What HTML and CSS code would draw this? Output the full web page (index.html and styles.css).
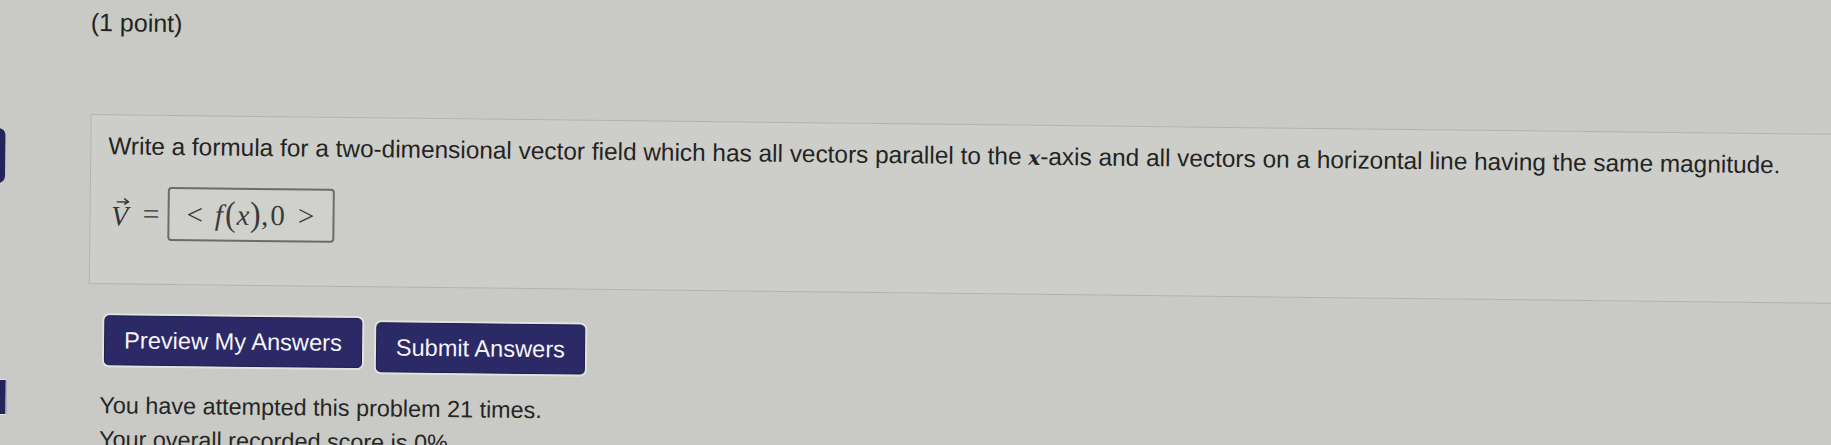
FILE: index.html
```html
<!DOCTYPE html>
<html lang="en">
<head>
<meta charset="utf-8">
<title>Problem</title>
<link rel="stylesheet" href="styles.css">
</head>
<body>
<div class="page">
  <div class="gutter">
    <div class="tab tab-top"></div>
    <div class="tab tab-bottom"></div>
  </div>
  <div class="main">
    <div class="points">(1 point)</div>
    <div class="problem">
      <div class="statement">Write a formula for a two-dimensional vector field which has all vectors parallel to the <span class="mathvar">x</span>-axis and all vectors on a horizontal line having the same magnitude.</div>
      <div class="answer-row">
        <span class="vec">
          <svg class="vec-arrow" width="14" height="8" viewBox="0 0 14 8" aria-hidden="true"><path d="M1 4.5 H12" stroke="#333" stroke-width="1.4" fill="none"/><path d="M8.5 1.2 L12.8 4.5 L8.5 7" stroke="#333" stroke-width="1.4" fill="none"/></svg>
          <span class="vec-letter">V</span>
        </span>
        <span class="eq">=</span>
        <div class="answer-input">
          <span class="mq-op mq-lt">&lt;</span><span class="mq-var mq-f">f</span><span class="mq-paren">(</span><span class="mq-var">x</span><span class="mq-paren">)</span><span class="mq-comma">,</span><span class="mq-num">0</span><span class="mq-op mq-gt">&gt;</span>
        </div>
      </div>
    </div>
    <div class="buttons">
      <button class="btn btn-preview">Preview My Answers</button>
      <button class="btn btn-submit">Submit Answers</button>
    </div>
    <div class="attempts">
      <div class="attempt-line">You have attempted this problem 21 times.</div>
      <div class="attempt-line">Your overall recorded score is 0%.</div>
    </div>
  </div>
</div>
</body>
</html>
```
FILE: styles.css
```css
html, body {
  margin: 0;
  padding: 0;
}
body {
  width: 1831px;
  height: 445px;
  overflow: hidden;
  background: #c9cac5;
  font-family: "Liberation Sans", Arial, sans-serif;
  color: #262626;
}
.page {
  display: flex;
  width: 1900px;
  transform: rotate(0.65deg);
  transform-origin: 0 0;
}
.gutter {
  width: 12px;
  flex: none;
  display: flex;
  flex-direction: column;
  align-items: flex-start;
}
.tab {
  background: #24235c;
}
.tab-top {
  margin-top: 128px;
  width: 7px;
  height: 55px;
  border-radius: 0 7px 7px 0;
}
.tab-bottom {
  margin-top: 196px;
  width: 10px;
  height: 34px;
  border: 1px solid #e2e3dd;
  border-left: none;
}
.main {
  flex: 1;
  margin-left: 79px;
}
.points {
  margin-top: 6px;
  font-size: 25px;
  line-height: 30px;
  color: #232323;
}
.problem {
  margin-top: 77px;
  margin-left: 1px;
  height: 170px;
  box-sizing: border-box;
  border: 1px solid #b3b4af;
  border-right: none;
  background: #cdcec9;
  padding: 16px 0 0 17px;
}
.statement {
  font-size: 24.4px;
  line-height: 30px;
  color: #242424;
  white-space: nowrap;
}
.mathvar {
  font-family: "DejaVu Serif", "Liberation Serif", serif;
  font-style: italic;
  font-weight: bold;
  font-size: 20px;
}
.answer-row {
  display: flex;
  align-items: center;
  margin-top: 24px;
  padding-left: 2px;
}
.vec {
  display: inline-flex;
  flex-direction: column;
  align-items: center;
  font-family: "Liberation Serif", "Times New Roman", serif;
  color: #333;
}
.vec-arrow {
  display: block;
  margin-left: 6px;
  margin-bottom: -2px;
}
.vec-letter {
  font-size: 28px;
  font-style: italic;
  line-height: 26px;
}
.eq {
  margin: 0 8px 0 13px;
  font-family: "Liberation Serif", "Times New Roman", serif;
  font-size: 30px;
  color: #4d4d4d;
}
.answer-input {
  width: 167px;
  height: 54px;
  box-sizing: border-box;
  border: 2px solid #6c6d69;
  border-radius: 4px;
  background: #d0d1cc;
  display: flex;
  align-items: center;
  padding-left: 17px;
  font-family: "Liberation Serif", "Times New Roman", serif;
  font-size: 29px;
  color: #3b3b3b;
}
.mq-lt {
  margin-right: 12px;
}
.mq-gt {
  margin-left: 13px;
}
.mq-var {
  font-style: italic;
}
.mq-f {
  margin-right: 2px;
}
.mq-paren {
  font-size: 35px;
  display: inline-block;
  transform: scaleX(0.9);
}
.mq-comma {
  margin-right: 2px;
}
.buttons {
  display: flex;
  align-items: flex-start;
  gap: 14px;
  margin-top: 31px;
  margin-left: 17px;
}
.btn {
  height: 50px;
  padding: 0 19px;
  background: #2b2a66;
  color: #f4f4f8;
  font-family: "Liberation Sans", Arial, sans-serif;
  font-size: 23.6px;
  border: 1px solid #1d1c4c;
  border-radius: 5px;
  box-shadow: 0 0 0 2px rgba(236, 237, 232, 0.7);
}
.btn-submit {
  margin-top: 4px;
}
.attempts {
  margin-top: 19px;
  margin-left: 13px;
}
.attempt-line {
  font-size: 23.4px;
  line-height: 34px;
  color: #262626;
}
```
